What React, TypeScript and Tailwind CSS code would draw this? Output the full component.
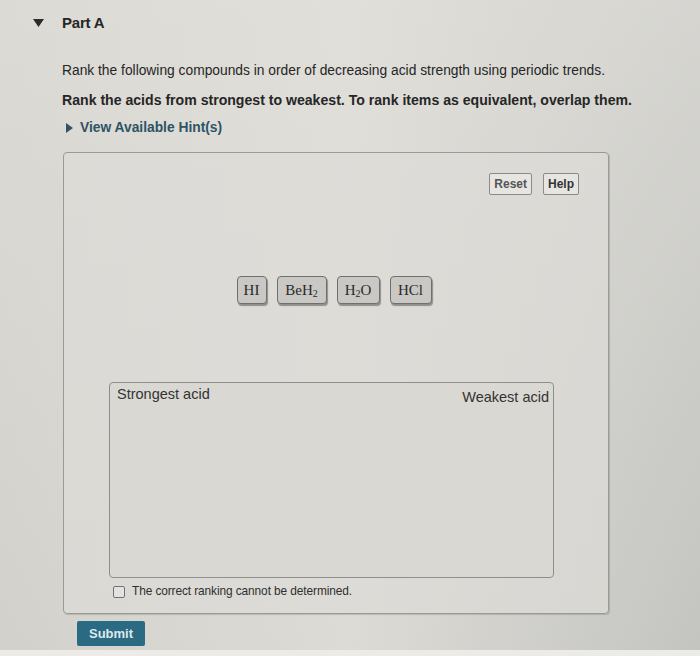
const chips: { key: string; label: React.ReactNode; w: string }[] = [
  { key: 'HI', label: 'HI', w: 'w-[30px]' },
  {
    key: 'BeH2',
    label: (
      <>
        BeH<sub className="text-[10px]">2</sub>
      </>
    ),
    w: 'w-[50px]',
  },
  {
    key: 'H2O',
    label: (
      <>
        H<sub className="text-[10px]">2</sub>O
      </>
    ),
    w: 'w-[43px]',
  },
  { key: 'HCl', label: 'HCl', w: 'w-[42px]' },
];

export default function App() {
  return (
    <div className="w-[700px] h-[656px] overflow-hidden bg-gradient-to-r from-[#d2d1cc] via-[#dcdbd6] to-[#c4c4c0] font-['Liberation_Sans',Arial,sans-serif] text-[#262626]">
      <div className="h-[650px] bg-gradient-to-b from-[#e2e1dc]/60 to-transparent">
        {/* header */}
        <div className="flex items-center pt-[13px] pl-[33px] h-[33px]">
          <svg width="11" height="8" viewBox="0 0 11 8" className="mr-[18px]">
            <path d="M0 0h11L5.5 8z" fill="#2b2b2b" />
          </svg>
          <span className="text-[15px] font-bold tracking-[-0.2px]">Part A</span>
        </div>

        <div className="pl-[62px]">
          <p className="mt-[29px] text-[13.8px] leading-[18px]">
            Rank the following compounds in order of decreasing acid strength using periodic trends.
          </p>
          <p className="mt-[11px] text-[14.1px] leading-[18px] font-bold">
            Rank the acids from strongest to weakest. To rank items as equivalent, overlap them.
          </p>
          <div className="mt-[10px] flex items-center pl-[4px] h-[18px]">
            <svg width="7" height="10" viewBox="0 0 7 10" className="mr-[7px]">
              <path d="M0 0l7 5-7 5z" fill="#2e5464" />
            </svg>
            <span className="text-[13.8px] font-bold text-[#2e5464]">View Available Hint(s)</span>
          </div>
        </div>

        {/* question box */}
        <div className="ml-[63px] mt-[15px] w-[546px] h-[462px] rounded-[4px] border border-[#9a9a97] bg-[#dddcd7]/70 shadow-[1px_1px_1px_rgba(0,0,0,0.15)] flex flex-col">
          <div className="flex justify-end gap-[11px] pr-[29px] pt-[20px]">
            <button className="h-[22px] px-[4px] rounded-[2px] border border-[#8b8b89] bg-[#e6e5e1] text-[12px] font-bold text-[#555]">
              Reset
            </button>
            <button className="h-[22px] px-[4px] rounded-[2px] border border-[#8b8b89] bg-[#e6e5e1] text-[12px] font-bold text-[#333]">
              Help
            </button>
          </div>

          <div className="mt-[81px] flex justify-center gap-[10px] pr-[4px]">
            {chips.map((c) => (
              <div
                key={c.key}
                className={`${c.w} h-[28px] flex items-center justify-center rounded-[4px] border border-[#6f6f6d] bg-[#c9c8c4] shadow-[1px_2px_1px_rgba(0,0,0,0.35)] font-['Liberation_Serif','Times_New_Roman',serif] text-[15px] text-[#2a2a2a]`}
              >
                <span>{c.label}</span>
              </div>
            ))}
          </div>

          <div className="ml-[45px] mt-[78px] w-[445px] h-[196px] rounded-[4px] border border-[#8e8e8b] bg-[#d9d8d3] flex justify-between px-[7px] pt-[1px] text-[14.5px] text-[#333]">
            <span>Strongest acid</span>
            <span className="mt-[3px] mr-[-3px]">Weakest acid</span>
          </div>

          <label className="ml-[49px] mt-[5px] flex items-center gap-[7px] text-[11.9px] text-[#2f2f2f]">
            <span className="w-[12px] h-[12px] rounded-[2px] border border-[#6d7378] bg-[#e3e2de]" />
            <span className="tracking-[-0.1px]">The correct ranking cannot be determined.</span>
          </label>
        </div>

        <button className="ml-[77px] mt-[7px] w-[68px] h-[25px] rounded-[2px] bg-[#2a6a83] text-[13px] font-bold text-[#dfe8ec]">
          Submit
        </button>
      </div>
      <div className="h-[6px] bg-[#ecebe8]" />
    </div>
  );
}
